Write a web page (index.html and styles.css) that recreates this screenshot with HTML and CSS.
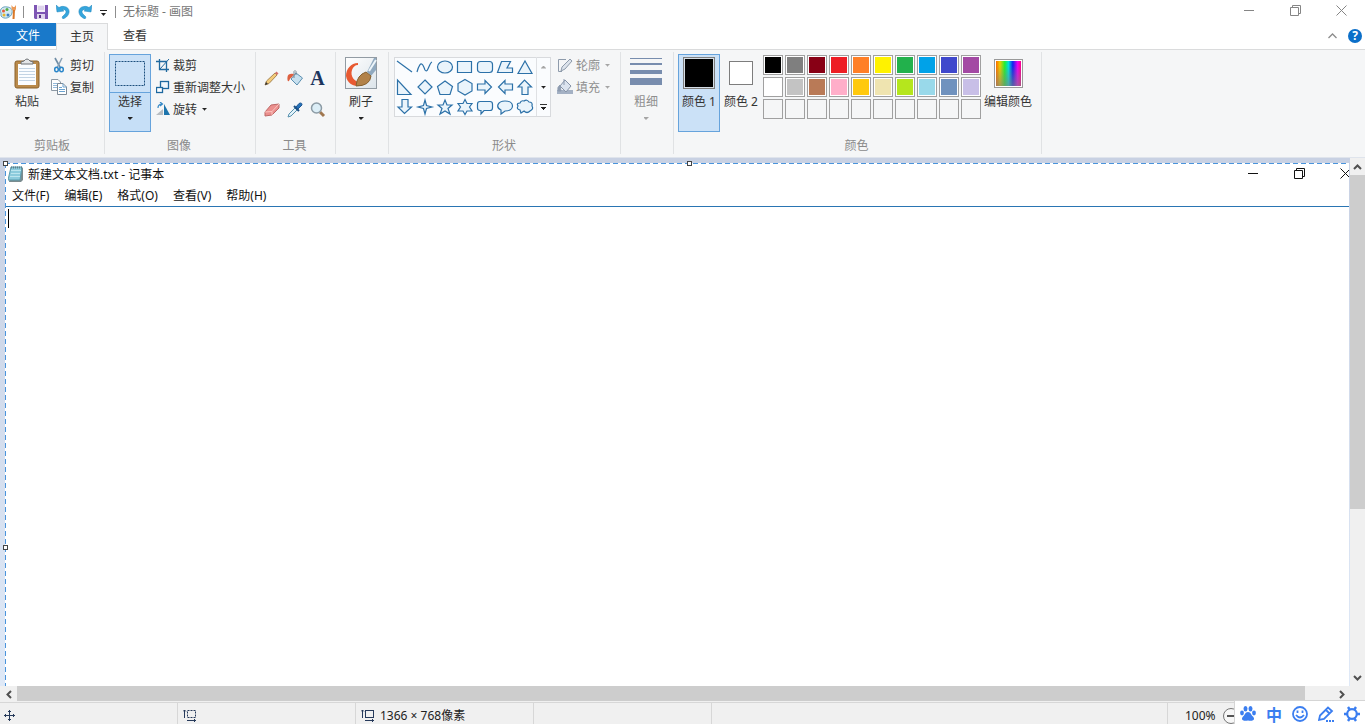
FILE: index.html
```html
<!DOCTYPE html>
<html lang="zh-CN">
<head>
<meta charset="utf-8">
<title>无标题 - 画图</title>
<link rel="stylesheet" href="styles.css">
</head>
<body>
<div class="app">
  <header class="titlebar">
    <svg class="app-icon" width="17" height="16" viewBox="0 0 17 16"><path d="M1 9C-1 5 3 2 7 3C10 3 13 5 12 9C11 14 4 16 1 12Z" fill="#d3e9f2" stroke="#6aa3bd"/><circle cx="3.500" cy="7" r="1.500" fill="#e55a3c"/><circle cx="7" cy="5.500" r="1.500" fill="#55ad45"/><circle cx="4" cy="11" r="1.500" fill="#e6b52c"/><circle cx="8" cy="11" r="1.500" fill="#3d7ec2"/><path d="M11.500 1V5L13 7H15L16 5V1L14.500 3H13Z" fill="#eb9a58"/><path d="M13 6H15L14.500 15H12.500Z" fill="#d97828"/></svg>
    <span class="tsep"></span>
    <button class="qbtn save" aria-label="保存"><svg width="14" height="14" viewBox="0 0 14 14"><path d="M0 0H14V14H1L0 13Z" fill="#7e55b4"/><path d="M3 0H11V7H3Z" fill="#f4effa"/><path d="M4 2H10M4 4H10" stroke="#c7b8dd"/><path d="M3 9H11V14H3Z" fill="#ded4ec"/><path d="M5 10H7V13H5Z" fill="#593687"/></svg></button>
    <button class="qbtn" aria-label="撤消"><svg width="14" height="14" viewBox="0 0 14 14"><path d="M0 0L1 7L8 6L6 4.500C10 4 11 7 9 9L6 12L7 14C15 11 15 2 8 1.500C6 1 4 2 3 2.500Z" fill="#35a5dc" stroke="#2387bd" stroke-width=".5"/></svg></button>
    <button class="qbtn" aria-label="恢复"><svg width="14" height="14" viewBox="0 0 14 14"><path d="M14 0L13 7L6 6L8 4.500C4 4 3 7 5 9L8 12L7 14C-1 11 -1 2 6 1.500C8 1 10 2 11 2.500Z" fill="#35a5dc" stroke="#2387bd" stroke-width=".5"/></svg></button>
    <button class="qbtn more" aria-label="自定义快速访问工具栏"><svg width="7" height="6" viewBox="0 0 7 6"><path d="M0 .5H7" stroke="#222"/><path d="M1 3H6L3.500 6Z" fill="#222"/></svg></button>
    <span class="tsep"></span>
    <h1 class="title">无标题 - 画图</h1>
    <div class="wincontrols">
      <button aria-label="最小化"><svg width="11" height="11" viewBox="0 0 11 11"><path d="M0 5.500H10"/></svg></button>
      <button aria-label="还原"><svg width="11" height="11" viewBox="0 0 11 11"><path d="M.5 2.500H8.500V10.500H.5ZM2.500 2V.5H10.500V8.500H9"/></svg></button>
      <button aria-label="关闭"><svg width="11" height="11" viewBox="0 0 11 11"><path d="M.5 .5L10.500 10.500M10.500 .5L.5 10.500"/></svg></button>
    </div>
  </header>

  <nav class="tabs">
    <button class="tab file">文件</button>
    <button class="tab active">主页</button>
    <button class="tab">查看</button>
    <div class="tabtools">
      <button aria-label="折叠功能区"><svg width="9" height="6" viewBox="0 0 9 6"><path d="M.5 5L4.500 1L8.500 5" fill="none" stroke="#8c8c8c" stroke-width="1.300"/></svg></button>
      <button class="help" aria-label="帮助">?</button>
    </div>
  </nav>

  <section class="ribbon">
    <div class="group clipboard">
      <div class="tools">
        <button class="big"><span class="pic"><svg width="26" height="31" viewBox="0 0 26 31"><rect x="1" y="3" width="24" height="27" rx="2" fill="#b98a4b" stroke="#8b632d"/><path d="M4 6H22V27H4Z" fill="#fbfdff"/><path d="M5 10.500H21M5 13.500H21M5 16.500H21M5 19.500H21M5 22.500H21" stroke="#c3d4e4"/><path d="M7 6V4L10 3Q13 -1 16 3L19 4V6Z" fill="#e4e6e8" stroke="#6d7175"/></svg></span><span>粘贴</span><i class="arrow"></i></button>
        <div class="stack">
          <button class="small"><svg width="16" height="16" viewBox="0 0 16 16"><path d="M4 1L9.500 11" stroke="#6e8ca5" stroke-width="1.600"/><path d="M11 1L6 11" stroke="#8aa2b5" stroke-width="1.600"/><ellipse cx="5.500" cy="12.500" rx="1.800" ry="2.300" fill="none" stroke="#2a86c9" stroke-width="1.500"/><ellipse cx="10.500" cy="12.500" rx="1.800" ry="2.300" fill="none" stroke="#2a86c9" stroke-width="1.500"/></svg>剪切</button>
          <button class="small"><svg width="16" height="16" viewBox="0 0 16 16"><path d="M.5 .5H7L9.500 3V11.500H.5Z" fill="#fff" stroke="#8c99a5"/><path d="M2 4.500H7M2 6.500H7M2 8.500H7" stroke="#94bbdc"/><path d="M6.500 4.500H12L15.500 8V15.500H6.500Z" fill="#fff" stroke="#7c8995"/><path d="M12 4.500V8H15.500M8 8.500H11M8 10.500H14M8 12.500H14" fill="none" stroke="#6ba3d0"/></svg>复制</button>
        </div>
      </div>
      <div class="glabel">剪贴板</div>
    </div>

    <div class="group image">
      <div class="tools">
        <button class="big selected split"><span class="pic"><svg width="30" height="25" viewBox="0 0 30 25"><rect x=".5" y=".5" width="29" height="24" fill="none" stroke="#1d4f7d" stroke-dasharray="2 1"/></svg></span><span>选择</span><i class="arrow"></i></button>
        <div class="stack">
          <button class="small"><svg width="14" height="14" viewBox="0 0 14 14"><path d="M3.500 1V11.500H13M0 3.500H10.500V14" fill="none" stroke="#20699f" stroke-width="1.300"/><path d="M4 11L13 1" stroke="#20699f"/></svg>裁剪</button>
          <button class="small"><svg width="14" height="14" viewBox="0 0 14 14"><rect x="4.500" y="1.500" width="8" height="7" fill="#eef6fc" stroke="#1d689f" stroke-width="1.300"/><rect x=".5" y="7.500" width="6" height="5" fill="#fff" stroke="#1d689f" stroke-width="1.300"/></svg>重新调整大小</button>
          <button class="small"><svg width="14" height="14" viewBox="0 0 14 14"><path d="M0 13L7 7V13Z" fill="#b8bdc2"/><path d="M8 2L14 13H8Z" fill="#1d74ac"/><path d="M2 6Q2 2 6 2M4 0L6.500 2L4 4" fill="none" stroke="#3488c6" stroke-width="1.200"/></svg>旋转<i class="arrow"></i></button>
        </div>
      </div>
      <div class="glabel">图像</div>
    </div>

    <div class="group drawtools">
      <div class="tools toolgrid">
        <button aria-label="铅笔"><svg width="16" height="16" viewBox="0 0 16 16"><path d="M1 15L2.500 11L11 3L13 5L5 13.500Z" fill="#f3cb7a" stroke="#94713e" stroke-width=".8"/><path d="M11 3L12.500 1.500L14.500 3.500L13 5Z" fill="#d4706a"/><path d="M1 15L2 12L4 14Z" fill="#333"/></svg></button>
        <button aria-label="用颜色填充"><svg width="16" height="16" viewBox="0 0 16 16"><path d="M9 3L15.500 8L10 15L4 9Z" fill="#c7e0ef" stroke="#5b8fb0"/><path d="M7 8V1.500Q8 -.5 9 1.500V5" fill="none" stroke="#748693"/><path d="M7 4Q1 3 .5 7Q0 12 2 11Q3 8 5 7Z" fill="#dd6040"/></svg></button>
        <button class="letter" aria-label="文本">A</button>
        <button aria-label="橡皮擦"><svg width="16" height="16" viewBox="0 0 16 16"><path d="M1 10L7 3L15 2L15 6L8 13L1 14Z" fill="#eb8f8d" stroke="#bd6867"/><path d="M1 10L8 9.500L15 2M8 9.500V13" fill="none" stroke="#fbc3bf"/></svg></button>
        <button aria-label="颜色选取器"><svg width="16" height="16" viewBox="0 0 16 16"><path d="M1 15L2 12L8 6L10 8L4 14Z" fill="#e1f2fa" stroke="#5992af"/><path d="M7 4L12 9" stroke="#194f84" stroke-width="2"/><path d="M9 5L12 1.500Q15 0 15 3L11 7Z" fill="#2673b9" stroke="#1e5594"/></svg></button>
        <button aria-label="放大镜"><svg width="16" height="16" viewBox="0 0 16 16"><path d="M10 10L14 14" stroke="#a0774f" stroke-width="3"/><circle cx="6.500" cy="6" r="5" fill="#dceef7" stroke="#8c9ba5" stroke-width="1.500"/></svg></button>
      </div>
      <div class="glabel">工具</div>
    </div>

    <div class="group brush">
      <div class="tools">
        <button class="big"><span class="pic"><svg width="32" height="32" viewBox="0 0 32 32"><defs><linearGradient id="brushBack" x2="1" y2="1"><stop stop-color="#fff"/><stop offset="1" stop-color="#dce4ea"/></linearGradient></defs><rect x=".5" y=".5" width="31" height="31" fill="url(#brushBack)" stroke="#929ba3"/><path d="M13 6C6 6 1 12 1 19C2 26 8 29 13 29L17 26C9 25 5 19 7 13C8 10 10 8 13 8Z" fill="#e85a32"/><path d="M22 15L29 1H31V13L26 19Z" fill="#90a9bf"/><path d="M24 14L31 3" stroke="#edf5fa" stroke-width="2"/><path d="M11 29Q12 18 21 15L26 19Q25 29 11 29Z" fill="#b28249" stroke="#85602f"/></svg></span><span>刷子</span><i class="arrow"></i></button>
      </div>
    </div>

    <div class="group shapes">
      <div class="tools">
        <div class="gallery">
          <div class="shapegrid">
            <button aria-label="直线"><svg viewBox="0 0 20 20"><path d="M2 4L17 15"/></svg></button>
            <button aria-label="曲线"><svg viewBox="0 0 20 20"><path d="M2 15C6 0 9 10 10 13C13 17 14 6 17 5" fill="none"/></svg></button>
            <button aria-label="椭圆"><svg viewBox="0 0 20 20"><ellipse cx="10" cy="10" rx="7.500" ry="6"/></svg></button>
            <button aria-label="矩形"><svg viewBox="0 0 20 20"><path d="M2.500 4.500H16.500V15.500H2.500Z"/></svg></button>
            <button aria-label="圆角矩形"><svg viewBox="0 0 20 20"><rect x="2.500" y="4.500" width="15" height="11" rx="3"/></svg></button>
            <button aria-label="多边形"><svg viewBox="0 0 20 20"><path d="M6.500 4.500H15.500L12 11H17.500V15.500H2.500Z"/></svg></button>
            <button aria-label="三角形"><svg viewBox="0 0 20 20"><path d="M10 4L17 16.500H3Z"/></svg></button>
            <button aria-label="直角三角形"><svg viewBox="0 0 20 20"><path d="M2.500 3V17.500H16Z"/></svg></button>
            <button aria-label="菱形"><svg viewBox="0 0 20 20"><path d="M10 3L17 10L10 17L3 10Z"/></svg></button>
            <button aria-label="五边形"><svg viewBox="0 0 20 20"><path d="M10 4L17.500 9.500L15 17.500H5L2.500 9.500Z"/></svg></button>
            <button aria-label="六边形"><svg viewBox="0 0 20 20"><path d="M10 2.500L17 6.500V14L10 18L3 14V6.500Z"/></svg></button>
            <button aria-label="右箭头"><svg viewBox="0 0 20 20"><path d="M2.500 7H10V3.500L16.500 10L10 16.500V13H2.500Z"/></svg></button>
            <button aria-label="左箭头"><svg viewBox="0 0 20 20"><path d="M17.500 7H10V3.500L3.500 10L10 16.500V13H17.500Z"/></svg></button>
            <button aria-label="上箭头"><svg viewBox="0 0 20 20"><path d="M7 17.500V10H3L9.500 3L16.500 10H13V17.500Z"/></svg></button>
            <button aria-label="下箭头"><svg viewBox="0 0 20 20"><path d="M7 2.500V10H3L9.500 16.500L16.500 10H13V2.500Z"/></svg></button>
            <button aria-label="四角星"><svg viewBox="0 0 20 20"><path d="M10 3L11.500 8.500L17 10L11.500 11.500L10 17L8.500 11.500L3 10L8.500 8.500Z"/></svg></button>
            <button aria-label="五角星"><svg viewBox="0 0 20 20"><path d="M10 3L12 8H17L13 11.500L15 17L10 14L5 17L7 11.500L3 8H8Z"/></svg></button>
            <button aria-label="六角星"><svg viewBox="0 0 20 20"><path d="M10 2.500L12 6.500H17L14.500 10L17 14H12L10 17.500L8 14H3L5.500 10L3 6.500H8Z"/></svg></button>
            <button aria-label="圆角矩形标注"><svg viewBox="0 0 20 20"><path d="M5 4.500H15Q17.500 4.500 17.500 7V11Q17.500 13.500 15 13.500H9L6 17V13.500H5Q2.500 13.500 2.500 11V7Q2.500 4.500 5 4.500Z"/></svg></button>
            <button aria-label="椭圆形标注"><svg viewBox="0 0 20 20"><path d="M6 13C0 10 3 4 10 4C20 4 20 14 10 14L6 17Z"/></svg></button>
            <button aria-label="云形标注"><svg viewBox="0 0 20 20"><path d="M5 6Q6 3 9 4Q12 2 14 5Q18 5 17 9Q19 12 15 14Q12 17 9 14L6 16L5 13Q1 12 3 9Q1 6 5 6Z"/></svg></button>
          </div>
          <div class="gscroll"><button aria-label="上一行"><i class="arrow up dim"></i></button><button aria-label="下一行"><i class="arrow"></i></button><button class="last" aria-label="更多形状"><i class="arrow"></i></button></div>
        </div>
        <div class="stack disabled">
          <button class="small"><svg width="16" height="16" viewBox="0 0 16 16"><path d="M9 2.500H1.500V14.500H5" fill="none" stroke="#8e9bab"/><path d="M4 14L5 10L13 2L15 4L8 12Z" fill="#dde3eb" stroke="#8e9bab"/></svg>轮廓<i class="arrow"></i></button>
          <button class="small"><svg width="16" height="16" viewBox="0 0 16 16"><path d="M0 11H16V15H0Z" fill="#a4b1c4"/><path d="M8 1L14 7L9 13L3 7Z" fill="#dce4ef" stroke="#8593a7"/><path d="M7 6V0M3 6Q0 8 1 12H4Z" fill="#8e9cb0" stroke="#8e9cb0"/></svg>填充<i class="arrow"></i></button>
        </div>
      </div>
      <div class="glabel">形状</div>
    </div>

    <div class="group size">
      <div class="tools">
        <button class="big disabled"><span class="pic"><svg width="32" height="30" viewBox="0 0 32 30"><path d="M0 0H32V1H0ZM0 5H32V7H0ZM0 12H32V16H0ZM0 20H32V27H0Z" fill="#788dae"/></svg></span><span>粗细</span><i class="arrow"></i></button>
      </div>
    </div>

    <div class="group colors">
      <div class="tools">
        <button class="big selected"><span class="pic"><span class="swatch one"></span></span><span>颜色 1</span></button>
        <button class="big"><span class="pic"><span class="swatch two"></span></span><span>颜色 2</span></button>
        <div class="palette">
          <button class="c-black" aria-label="黑色"></button><button class="c-gray" aria-label="灰色"></button><button class="c-maroon" aria-label="深红色"></button><button class="c-red" aria-label="红色"></button><button class="c-orange" aria-label="橙色"></button><button class="c-yellow" aria-label="黄色"></button><button class="c-green" aria-label="绿色"></button><button class="c-cyan" aria-label="青绿"></button><button class="c-indigo" aria-label="靛青"></button><button class="c-purple" aria-label="紫色"></button>
          <button class="c-white" aria-label="白色"></button><button class="c-silver" aria-label="浅灰色"></button><button class="c-brown" aria-label="褐色"></button><button class="c-rose" aria-label="玫瑰色"></button><button class="c-gold" aria-label="金色"></button><button class="c-cream" aria-label="浅黄色"></button><button class="c-lime" aria-label="酸橙色"></button><button class="c-sky" aria-label="淡青绿色"></button><button class="c-steel" aria-label="蓝灰色"></button><button class="c-lilac" aria-label="淡紫色"></button>
          <button class="empty" aria-label="自定义 1"></button><button class="empty" aria-label="自定义 2"></button><button class="empty" aria-label="自定义 3"></button><button class="empty" aria-label="自定义 4"></button><button class="empty" aria-label="自定义 5"></button><button class="empty" aria-label="自定义 6"></button><button class="empty" aria-label="自定义 7"></button><button class="empty" aria-label="自定义 8"></button><button class="empty" aria-label="自定义 9"></button><button class="empty" aria-label="自定义 10"></button>
        </div>
        <button class="big edit"><span class="pic"><span class="rainbow"></span></span><span>编辑颜色</span></button>
      </div>
      <div class="glabel">颜色</div>
    </div>
  </section>

  <main class="workspace">
    <div class="viewport">
      <div class="canvas">
        <span class="handle corner"></span><span class="handle top"></span><span class="handle left"></span>
        <div class="notepad">
          <div class="np-title">
            <svg width="16" height="16" viewBox="0 0 16 16"><path d="M3 2H15V14L13 16H1Z" fill="#7b8c8f"/><path d="M3 1H14L12 14H0Z" fill="#8ccbdc" stroke="#5b9bad"/><path d="M3 4.500H13M3 7.500H12M2 10.500H12" stroke="#bce5ee"/><path d="M3 1.500H14" stroke="#607f88" stroke-dasharray="1 1" stroke-width="2"/></svg>
            <span>新建文本文档.txt - 记事本</span>
            <div class="np-controls">
              <button aria-label="最小化"><svg width="11" height="11" viewBox="0 0 11 11"><path d="M0 5.500H10"/></svg></button>
              <button aria-label="还原"><svg width="11" height="11" viewBox="0 0 11 11"><path d="M.5 2.500H8.500V10.500H.5ZM2.500 2V.5H10.500V8.500H9"/></svg></button>
              <button aria-label="关闭"><svg width="11" height="11" viewBox="0 0 11 11"><path d="M.5 .5L10.500 10.500M10.500 .5L.5 10.500"/></svg></button>
            </div>
          </div>
          <nav class="np-menu"><button>文件(F)</button><button>编辑(E)</button><button>格式(O)</button><button>查看(V)</button><button>帮助(H)</button></nav>
          <div class="np-text"><span class="caret"></span></div>
        </div>
      </div>
    </div>
    <div class="vscroll">
      <button aria-label="向上滚动"><svg width="9" height="6" viewBox="0 0 9 6"><path d="M1 5L4.500 1.500L8 5"/></svg></button>
      <div class="vtrack"><div class="vthumb"></div></div>
      <button aria-label="向下滚动"><svg width="9" height="6" viewBox="0 0 9 6"><path d="M1 1L4.500 4.500L8 1"/></svg></button>
    </div>
    <div class="hscroll">
      <button aria-label="向左滚动"><svg width="6" height="9" viewBox="0 0 6 9"><path d="M5 1L1.500 4.500L5 8"/></svg></button>
      <div class="htrack"><div class="hthumb"></div></div>
      <button aria-label="向右滚动"><svg width="6" height="9" viewBox="0 0 6 9"><path d="M1 1L4.500 4.500L1 8"/></svg></button>
    </div>
  </main>

  <footer class="status">
    <div class="cell"><svg width="11" height="11" viewBox="0 0 11 11"><path d="M0 5.500H11M5.500 0V11M4 2L5.500 .5L7 2M4 9L5.500 10.500L7 9M2 4L.5 5.500L2 7M9 4L10.500 5.500L9 7" fill="none" stroke="#263a5b"/></svg></div>
    <div class="cell"><svg width="14" height="13" viewBox="0 0 14 13"><rect x="4.500" y="1.500" width="8" height="7" fill="none" stroke="#263a5b" stroke-dasharray="2 1"/><path d="M1.500 9V1M0 2.500L1.500 1L3 2.500M4 11.500H13M11 10L12.500 11.500L11 13" fill="none" stroke="#263a5b"/></svg></div>
    <div class="cell"><svg width="14" height="13" viewBox="0 0 14 13"><rect x="4.500" y="1.500" width="8" height="7" fill="none" stroke="#263a5b"/><path d="M1.500 9V1M0 2.500L1.500 1L3 2.500M4 11.500H13M11 10L12.500 11.500L11 13" fill="none" stroke="#263a5b"/></svg><span>1366 × 768像素</span></div>
    <div class="cell"></div>
    <div class="cell grow"></div>
    <div class="zoom"><span>100%</span><button aria-label="缩小"><svg width="16" height="16" viewBox="0 0 16 16"><circle cx="8" cy="8" r="7.500" fill="#f7f7f7" stroke="#777"/><path d="M4 8H12" stroke="#555" stroke-width="2"/></svg></button></div>
  </footer>

  <aside class="ime">
    <button aria-label="百度输入法"><svg width="16" height="15" viewBox="0 0 16 15" fill="#3b7ef0"><ellipse cx="5.500" cy="2.800" rx="2" ry="2.700"/><ellipse cx="10.500" cy="2.800" rx="2" ry="2.700"/><ellipse cx="2" cy="7" rx="1.900" ry="2.400"/><ellipse cx="14" cy="7" rx="1.900" ry="2.400"/><path d="M8 6C5 6 5 9 3 10.500C0 14 4 15.500 8 14.500C12 15.500 16 14 13 10.500C11 9 11 6 8 6Z"/></svg></button>
    <button class="lang">中</button>
    <button aria-label="表情"><svg width="16" height="16" viewBox="0 0 16 16" fill="none" stroke="#3b7ef0" stroke-width="1.800"><circle cx="8" cy="8" r="7"/><path d="M4 9Q8 14 12 9M5.500 4.500V7M10.500 4.500V7"/></svg></button>
    <button aria-label="手写"><svg width="16" height="16" viewBox="0 0 16 16" fill="none" stroke="#3b7ef0" stroke-width="1.800"><path d="M1 14L2 9.500L10 1.500L14 5L6 13ZM8 4L11.500 7.500"/><path d="M8 15H16" stroke-dasharray="2 1"/></svg></button>
    <button aria-label="设置"><svg width="16" height="16" viewBox="0 0 16 16" fill="none" stroke="#3b7ef0"><circle cx="8" cy="8" r="4.800" stroke-width="2.200"/><path d="M4 1L6 4M12 1L10 4M4 15L6 12M12 15L10 12M0 8H4M12 8H16" stroke-width="2.400"/></svg></button>
  </aside>
</div>
</body>
</html>
```

FILE: styles.css
```css
* { box-sizing: border-box; }
html, body { height: 100%; margin: 0; }
body {
  font: 12px/16px "Noto Sans", "Noto Sans CJK SC", sans-serif;
  color: #333;
  background: #fff;
  overflow: hidden;
}
button {
  font: inherit;
  color: inherit;
  background: none;
  border: 0;
  margin: 0;
  padding: 0;
  white-space: nowrap;
}
svg { display: block; flex: none; }
.app { position: relative; height: 100vh; display: flex; flex-direction: column; }

.arrow {
  flex: none; width: 5px; height: 3px; background: #222;
  clip-path: polygon(0 0, 100% 0, 100% 34%, 80% 34%, 80% 67%, 60% 67%, 60% 100%, 40% 100%, 40% 67%, 20% 67%, 20% 34%, 0 34%);
}
.arrow.up { clip-path: polygon(0 100%, 100% 100%, 100% 67%, 80% 67%, 80% 34%, 60% 34%, 60% 0, 40% 0, 40% 34%, 20% 34%, 20% 67%, 0 67%); }
.arrow.dim, .disabled .arrow { background: #a5a5a5; }

/* Title bar */
.titlebar { display: flex; align-items: center; height: 23px; flex: none; }
.tsep { width: 1px; height: 12px; margin-left: 6px; background: #8e8e8e; }
.qbtn { margin-left: 8px; }
.qbtn.save { margin-left: 10px; }
.qbtn.more { padding-top: 3px; }
.titlebar .more + .tsep { margin-left: 8px; }
.title { margin: 0 0 0 7px; font: inherit; color: #777; }
.wincontrols { display: flex; align-self: flex-start; margin-left: auto; margin-right: 1px; }
.wincontrols button { width: 46px; height: 21px; display: grid; place-items: center; }
.wincontrols path { fill: none; stroke: #858585; }

/* Tabs */
.tabs { display: flex; height: 27px; flex: none; border-bottom: 1px solid #dadbdc; }
.tab { padding: 0 15px; height: 26px; }
.tab.file { width: 56px; height: 23px; padding: 2px 0 0; color: #fff; background: #1979ca; }
.tab.active { width: 52px; height: 27px; padding: 0 0 1px; background: #f5f6f7; border: 1px solid #dadbdc; border-width: 1px 1px 0; }
.tabtools { display: flex; align-items: center; gap: 11px; margin-left: auto; padding-right: 3px; }
.help { width: 14px; height: 14px; border-radius: 50%; background: #0b6fc9; color: #fff; font-weight: 700; line-height: 14px; }

/* Ribbon */
.ribbon { display: flex; height: 107px; flex: none; background: #f5f6f7; padding: 2px 0 3px; overflow: hidden; }
.group { display: flex; flex-direction: column; flex: none; border-right: 1px solid #e0e2e4; padding: 2px 4px 0; }
.tools { display: flex; height: 84px; flex: none; }
.glabel { text-align: center; color: #8a8a8a; padding-right: 2px; }
.clipboard { width: 105px; padding-left: 6px; }
.image { width: 151px; }
.drawtools { width: 80px; }
.brush { width: 53px; }
.shapes { width: 232px; padding-left: 5px; }
.size { width: 53px; }
.colors { width: 368px; }

.big { display: flex; flex-direction: column; align-items: center; width: 42px; height: 78px; border: 1px solid transparent; padding: 2px 0; }
.pic { display: grid; place-items: center; height: 32px; margin-bottom: 5px; }
.big .arrow { margin-top: 7px; }
.selected { background: #cbe1f7; border-color: #66a3dc; }
.split { background: linear-gradient(#cbe1f7 37px, #66a3dc 37px, #66a3dc 38px, #c6dff7 38px); }
.stack { display: flex; flex-direction: column; margin-left: 3px; }
.image .stack { margin-left: 5px; }
.small { display: flex; align-items: center; height: 22px; gap: 3px; padding-top: 2px; }
.small svg { margin-bottom: 2px; }
.small .arrow { margin: 0 0 2px 2px; }
.disabled { color: #8f8f8f; }
.toolgrid { display: grid; grid-template-columns: repeat(3, 23px); grid-template-rows: 32px 32px; padding-top: 8px; }
.toolgrid button { display: grid; place-items: center; }
.toolgrid .letter { font: bold 20px/20px "Liberation Serif", serif; color: #1c355e; }

.gallery { display: flex; width: 157px; height: 60px; margin-top: 3px; border: 1px solid #d8dadd; background: #fafcfe; }
.shapegrid { display: grid; grid-template: repeat(3, 20px) / repeat(7, 20px); width: 141px; margin-top: -1px; }
.shapegrid svg { width: 20px; height: 20px; fill: #eaf4fb; stroke: #2c71a8; stroke-width: 1.2; }
.gscroll { display: grid; flex: 1; grid-template-rows: repeat(3, 20px); border-left: 1px solid #dfe1e4; margin-top: -1px; }
.gscroll button { display: grid; place-items: center; align-content: center; }
.gscroll .last::before { content: ""; width: 7px; height: 1px; margin-bottom: 2px; background: #333; }
.shapes .stack { margin-left: 6px; }

.swatch { border: 1px solid #7d7d7d; padding: 1px; background: #fff; }
.swatch.one { width: 32px; height: 32px; background: #000 content-box; box-shadow: inset 0 0 0 1px #d5dde5; }
.swatch.two { width: 24px; height: 24px; }
.palette { display: grid; grid-template: repeat(3, 20px) / repeat(10, 20px); gap: 2px; align-content: start; margin: 1px 2px 0 1px; }
.palette button { border: 1px solid #a0a0a0; box-shadow: inset 0 0 0 1px #fff; }
.palette .empty { box-shadow: none; }
.c-black { background: #000; } .c-gray { background: #7f7f7f; } .c-maroon { background: #880015; }
.c-red { background: #ed1c24; } .c-orange { background: #ff7f27; } .c-yellow { background: #fff200; }
.c-green { background: #22b14c; } .c-cyan { background: #00a2e8; } .c-indigo { background: #3f48cc; }
.c-purple { background: #a349a4; } .c-white { background: #fff; } .c-silver { background: #c3c3c3; }
.c-brown { background: #b97a57; } .c-rose { background: #ffaec9; } .c-gold { background: #ffc90e; }
.c-cream { background: #efe4b0; } .c-lime { background: #b5e61d; } .c-sky { background: #99d9ea; }
.c-steel { background: #7092be; } .c-lilac { background: #c8bfe7; }
.edit { width: 50px; }
.rainbow {
  width: 29px; height: 29px; border: 1px solid #999; box-shadow: inset 0 0 0 1px #fff;
  background: linear-gradient(transparent 20%, #808080aa), linear-gradient(90deg, #f50, #ec0 18%, #2e3 36%, #0dd 50%, #12e 66%, #e0e 84%, #f06);
}

/* Workspace */
.workspace { flex: 1; min-height: 0; display: grid; grid-template: 1fr 16px / 1fr 15px; background: #f0f0f0; border-top: 1px solid #dfe4ec; }
.viewport { min-width: 0; overflow: hidden; padding: 5px 1px 0 5px; background: linear-gradient(#c8d1e3, #dfe9f7); }
.canvas {
  position: relative; height: 100%; padding: 1px 0 0 1px;
  background:
    repeating-linear-gradient(90deg, #4a94dc 0 5px, #fff 5px 8px) top / 100% 1px no-repeat,
    repeating-linear-gradient(#4a94dc 0 5px, #fff 5px 8px) left / 1px 100% no-repeat,
    #fff;
}
.handle { position: absolute; width: 5px; height: 5px; border: 1px solid #444; background: #fff; }
.corner { left: -2px; top: -2px; }
.top { left: 51%; top: -2px; margin-left: -3px; }
.left { left: -2px; top: 73%; }
.notepad { height: 100%; display: flex; flex-direction: column; color: #111; overflow: hidden; }
.np-title { display: flex; align-items: center; height: 20px; gap: 4px; padding-left: 2px; }
.np-title span { padding-top: 2px; }
.np-controls { display: flex; align-self: flex-start; margin-left: auto; margin-right: -19px; }
.np-controls button { width: 46px; height: 19px; display: grid; place-items: center; }
.np-controls path { fill: none; stroke: #111; }
.np-menu { display: flex; gap: 15px; height: 23px; padding: 2px 6px 0; border-bottom: 1px solid #2a75b3; }
.np-text { flex: 1; background: #fff; padding: 2px; }
.caret { display: block; width: 1px; height: 19px; background: #000; }

.vscroll { display: flex; flex-direction: column; }
.vscroll button, .hscroll button { display: grid; place-items: center; flex: none; }
.vscroll button { height: 17px; }
.vscroll path, .hscroll path { fill: none; stroke: #505050; stroke-width: 2; }
.vtrack, .htrack { flex: 1; }
.vthumb { height: 67.6%; background: #cdcdcd; }
.hscroll { grid-column: 1; display: flex; }
.hscroll button { width: 17px; }
.hthumb { width: 97.9%; height: 15px; background: #cdcdcd; }

/* Status bar */
.status { display: flex; height: 22px; flex: none; background: #f0f0f0; border-top: 1px solid #d7d7d7; color: #222; }
.cell { display: flex; align-items: center; gap: 5px; width: 178px; flex: none; padding: 4px 4px 0; border-right: 1px solid #d7d7d7; }
.cell:nth-child(n+2) { padding-left: 5px; }
.cell.grow { flex: 1; }
.zoom { display: flex; align-items: center; gap: 7px; width: 197px; padding: 4px 0 0 17px; }

/* Input method toolbar */
.ime { position: absolute; right: 0; bottom: 0; display: flex; width: 131px; height: 24px; background: #fff; border: 1px solid #d5d5d5; border-width: 1px 0 0 1px; }
.ime button { width: 26px; display: grid; place-items: center; padding-top: 2px; flex: none; }
.lang { color: #3b7ef0; font: bold 16px/18px "Noto Sans CJK SC", sans-serif; }
```
